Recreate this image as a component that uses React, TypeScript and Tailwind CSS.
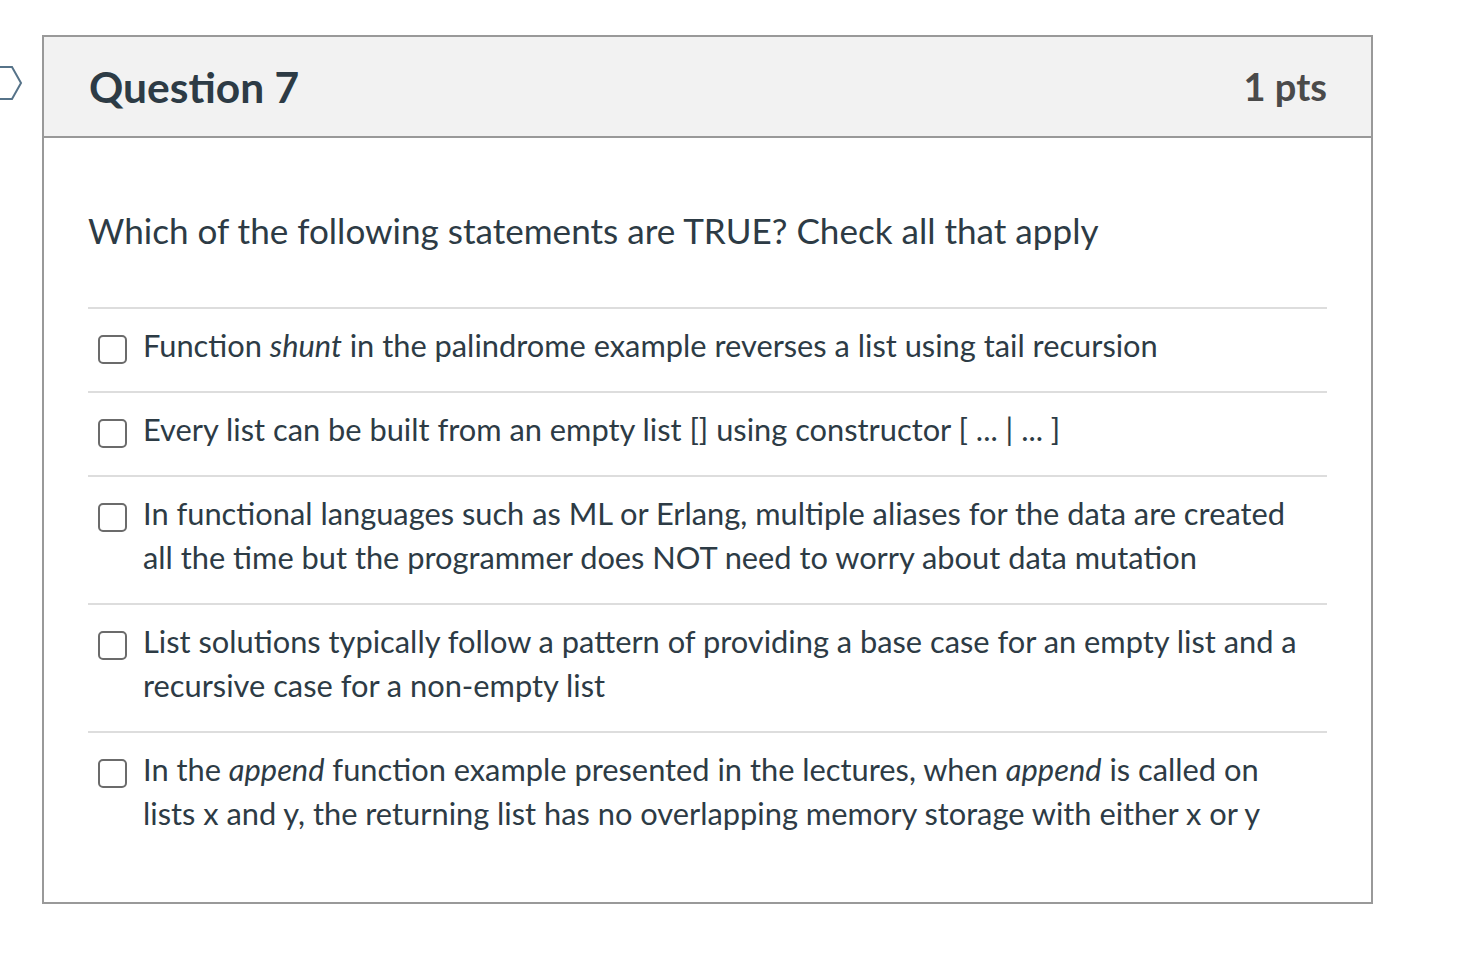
import React from "react";

const options: React.ReactNode[] = [
  <>Function <em>shunt</em> in the palindrome example reverses a list using tail recursion</>,
  <>Every list can be built from an empty list [] using constructor [ ... | ... ]</>,
  <>In functional languages such as ML or Erlang, multiple aliases for the data are created all the time but the programmer does NOT need to worry about data mutation</>,
  <>List solutions typically follow a pattern of providing a base case for an empty list and a recursive case for a non-empty list</>,
  <>In the <em>append</em> function example presented in the lectures, when <em>append</em> is called on lists x and y, the returning list has no overlapping memory storage with either x or y</>,
];

export default function App() {
  return (
    <div className="relative w-[1461px] h-[955px] bg-white font-['Lato','Noto_Sans',sans-serif] text-[#2d3b45]">
      <svg className="absolute left-0 top-[60px]" width="30" height="46" viewBox="0 0 30 46">
        <polyline points="-4,7 12,7 21,23 12,39 -4,39" fill="none" stroke="#567389" strokeWidth="2" />
      </svg>
      <div className="pt-[35px] pl-[42px]">
        <div className="w-[1331px] h-[869px] border-2 border-[#999999] flex flex-col">
          <div className="h-[101px] bg-[#f2f2f2] border-b-2 border-[#999999] flex items-center justify-between pl-[45px] pr-[44px]">
            <h2 className="text-[42.5px] font-bold text-[#2d3b45]">Question 7</h2>
            <div className="text-[38px] font-bold text-[#4a4a4a]">1 pts</div>
          </div>
          <div className="px-[44px] pt-[70px]">
            <p className="text-[35.1px] leading-[44px]">Which of the following statements are TRUE? Check all that apply</p>
            <div className="mt-[55px]">
              {options.map((o, i) => (
                <div key={i} className="flex items-start gap-[16px] pl-[10px] pr-[20px] pt-[15px] pb-[23px] border-t-2 border-[#dddddd]">
                  <div className="mt-[11px] w-[29px] h-[29px] shrink-0 rounded-[5px] border-2 border-[#6b6b6b]" />
                  <div className="text-[30.8px] leading-[44px]">{o}</div>
                </div>
              ))}
            </div>
          </div>
        </div>
      </div>
    </div>
  );
}
